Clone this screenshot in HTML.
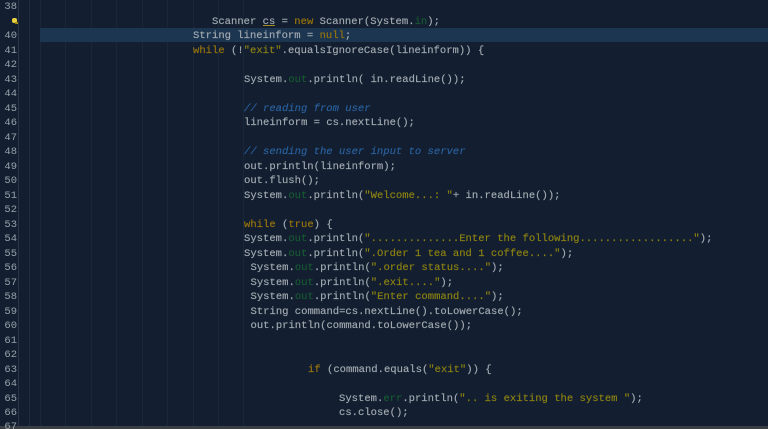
<!DOCTYPE html>
<html><head><meta charset="utf-8">
<style>
html,body{margin:0;padding:0;background:#131f30;}
#r{position:relative;width:768px;height:429px;overflow:hidden;background:#131f30;font-family:"Liberation Mono",monospace;font-size:10.55px;color:#a4abb2;}
.l{position:absolute;white-space:pre;line-height:14px;height:14px;filter:blur(0.3px);-webkit-text-stroke:0.15px currentColor;}
.n{position:absolute;left:0;width:17px;text-align:right;color:#98a1aa;line-height:14px;height:14px;font-family:"Liberation Mono",monospace;font-size:10.5px;filter:blur(0.3px);}
.g{position:absolute;top:0;bottom:3px;width:1px;background:#18273a;}
.k{color:#9a750c}.s{color:#8e8312}.f{color:#175a32}.c{color:#2a619f;font-style:italic}
</style></head><body><div id="r">
<div class="g" style="left:18px;background:#2a3644"></div>
<div class="g" style="left:29px;background:#202e40"></div>
<div class="g" style="left:40px"></div><div class="g" style="left:65px"></div><div class="g" style="left:91px"></div><div class="g" style="left:116px"></div><div class="g" style="left:142px"></div><div class="g" style="left:167px"></div><div class="g" style="left:193px"></div><div class="g" style="left:218px"></div><div class="g" style="left:243px"></div>
<div style="position:absolute;left:40px;top:28px;width:728px;height:14px;background:#1c3550"></div>
<div style="position:absolute;left:0;right:0;top:426px;height:3px;background:#3a3f44"></div>
<div style="position:absolute;left:12px;top:18px;width:5px;height:5px;border-radius:2px;background:#e8d040"></div>
<div style="position:absolute;left:15px;top:22px;width:3px;height:2px;background:#a88a10"></div>
<div style="position:absolute;left:263px;top:25px;width:12px;height:1px;background:#a08c20"></div>

<div class="n" style="top:0px">38</div>
<div class="n" style="top:29px">40</div>
<div class="n" style="top:44px">41</div>
<div class="n" style="top:58px">42</div>
<div class="n" style="top:73px">43</div>
<div class="n" style="top:87px">44</div>
<div class="n" style="top:102px">45</div>
<div class="n" style="top:116px">46</div>
<div class="n" style="top:131px">47</div>
<div class="n" style="top:145px">48</div>
<div class="n" style="top:160px">49</div>
<div class="n" style="top:174px">50</div>
<div class="n" style="top:189px">51</div>
<div class="n" style="top:203px">52</div>
<div class="n" style="top:218px">53</div>
<div class="n" style="top:232px">54</div>
<div class="n" style="top:247px">55</div>
<div class="n" style="top:261px">56</div>
<div class="n" style="top:276px">57</div>
<div class="n" style="top:290px">58</div>
<div class="n" style="top:305px">59</div>
<div class="n" style="top:319px">60</div>
<div class="n" style="top:334px">61</div>
<div class="n" style="top:348px">62</div>
<div class="n" style="top:363px">63</div>
<div class="n" style="top:377px">64</div>
<div class="n" style="top:392px">65</div>
<div class="n" style="top:406px">66</div>
<div class="n" style="top:420px">67</div>

<div class="l" style="left:212px;top:15px">Scanner cs = <span class="k">new</span> Scanner(System.<span class="f">in</span>);</div>
<div class="l" style="left:193px;top:29px">String lineinform = <span class="k">null</span>;</div>
<div class="l" style="left:193px;top:44px"><span class="k">while</span> (!<span class="s">"exit"</span>.equalsIgnoreCase(lineinform)) {</div>
<div class="l" style="left:244px;top:73px">System.<span class="f">out</span>.println( in.readLine());</div>
<div class="l c" style="left:244px;top:102px">// reading from user</div>
<div class="l" style="left:244px;top:116px">lineinform = cs.nextLine();</div>
<div class="l c" style="left:244px;top:145px">// sending the user input to server</div>
<div class="l" style="left:244px;top:160px">out.println(lineinform);</div>
<div class="l" style="left:244px;top:174px">out.flush();</div>
<div class="l" style="left:244px;top:189px">System.<span class="f">out</span>.println(<span class="s">"Welcome...: "</span>+ in.readLine());</div>
<div class="l" style="left:244px;top:218px"><span class="k">while</span> (<span class="k">true</span>) {</div>
<div class="l" style="left:244px;top:232px">System.<span class="f">out</span>.println(<span class="s">"..............Enter the following.................."</span>);</div>
<div class="l" style="left:244px;top:247px">System.<span class="f">out</span>.println(<span class="s">".Order 1 tea and 1 coffee...."</span>);</div>
<div class="l" style="left:250.5px;top:261px">System.<span class="f">out</span>.println(<span class="s">".order status...."</span>);</div>
<div class="l" style="left:250.5px;top:276px">System.<span class="f">out</span>.println(<span class="s">".exit...."</span>);</div>
<div class="l" style="left:250.5px;top:290px">System.<span class="f">out</span>.println(<span class="s">"Enter command...."</span>);</div>
<div class="l" style="left:250.5px;top:305px">String command=cs.nextLine().toLowerCase();</div>
<div class="l" style="left:250.5px;top:319px">out.println(command.toLowerCase());</div>
<div class="l" style="left:308px;top:363px"><span class="k">if</span> (command.equals(<span class="s">"exit"</span>)) {</div>
<div class="l" style="left:339px;top:392px">System.<span class="f">err</span>.println(<span class="s">".. is exiting the system "</span>);</div>
<div class="l" style="left:339px;top:406px">cs.close();</div>
</div></body></html>
